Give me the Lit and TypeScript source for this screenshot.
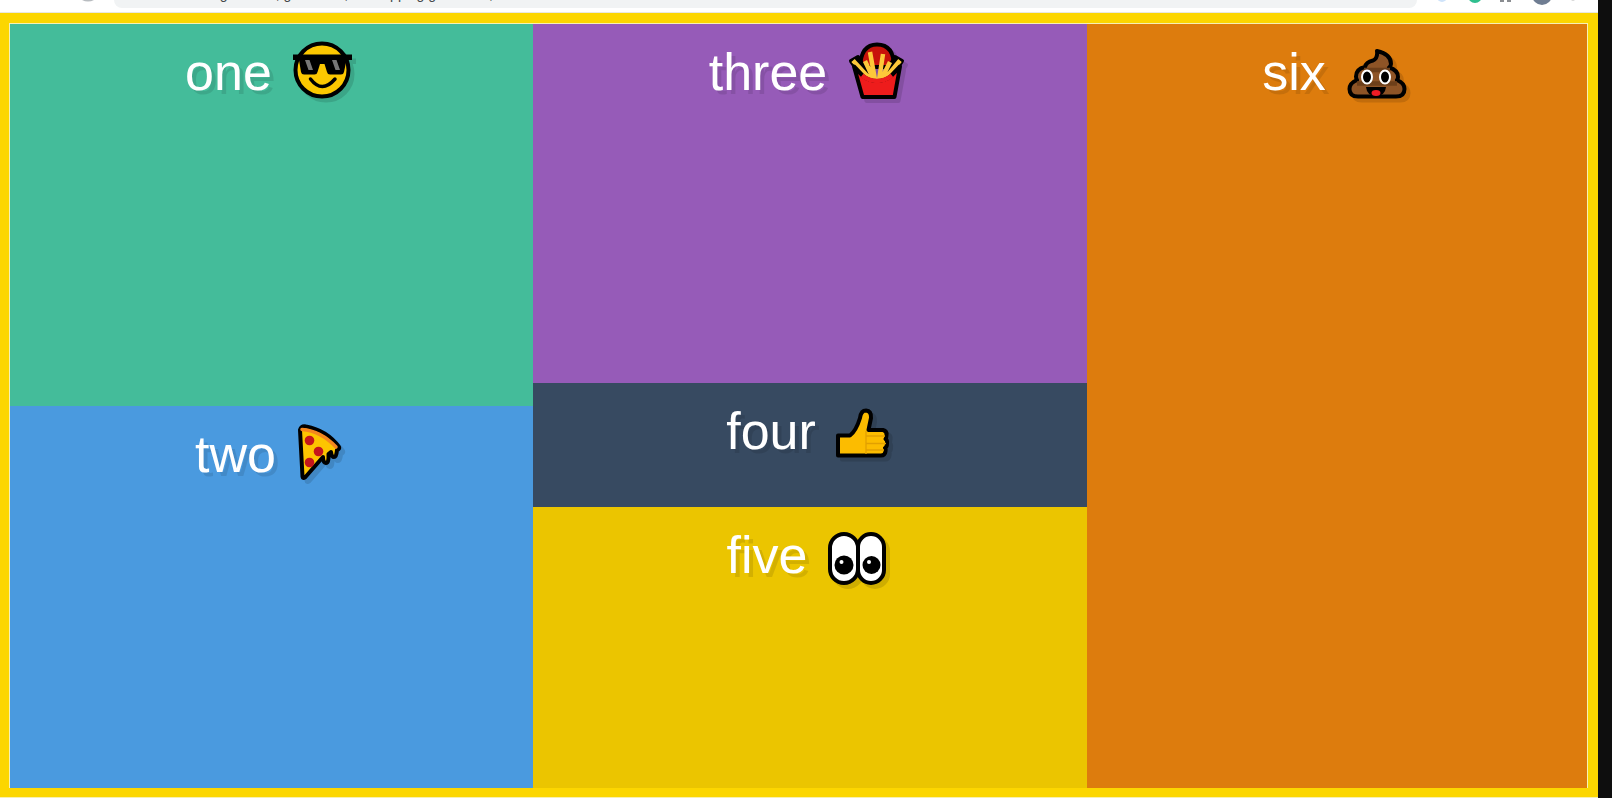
import { LitElement, html, css, svg } from "lit";
import { customElement } from "lit/decorators.js";

const O = "#000";

const cool = html`<svg class="emoji" width="72" height="64" viewBox="1 0 72 64">
  <circle cx="37" cy="31" r="26.500" fill="#fcc800" stroke="${O}" stroke-width="4"/>
  <path d="M8 15.500H67V21H61.500L59 33Q58.500 35.500 56 35.500H45Q42.500 35.500 42 33L39.500 25H35L32.500 33Q32 35.500 29.500 35.500H19Q16.500 35.500 16 33L14 21H8Z" fill="${O}"/>
  <path d="M20 21H24.500L28 31H23.500ZM47 21H51.500L55 31H50.500Z" fill="#777"/>
  <path d="M25.500 40Q37 55 50 40" fill="none" stroke="${O}" stroke-width="3.500" stroke-linecap="round"/>
</svg>`;

const fries = html`<svg class="emoji" width="70" height="64" viewBox="0 0 70 64">
  <path d="M19 28Q20 5.500 36 5.500Q53 5.500 53 28Z" fill="#c8120a" stroke="${O}" stroke-width="4"/>
  <path d="M10 22L17 18L28 36L21 38ZM61 22L54 18L44 36L51 38Z" fill="${O}" stroke="${O}" stroke-width="4" stroke-linejoin="round"/>
  <g fill="none" stroke="#fdc83a" stroke-width="4.500">
    <path d="M12 21.500L30 41M24 22L33 41M29 13L34 41M42 15L38 41M49 23L40 41M59 21.500L43 41"/>
  </g>
  <path d="M13 27.500L22 37Q28 42 36 42Q44 42 50 37L59 27.500L53.500 58H21.500Z" fill="#ee1c1c" stroke="${O}" stroke-width="4" stroke-linejoin="round"/>
  <path d="M21 36.500Q28 42 36 42Q44 42 51 36.500" fill="none" stroke="#ee1c1c" stroke-width="4.500"/>
</svg>`;

const poop = html`<svg class="emoji" width="72" height="64" viewBox="0 0 72 64">
  <path d="M37 12Q51 15 51 25Q51 27 49 28.500Q58 31 58 38Q58 40 57 41Q64.500 44 64.500 50Q64.500 57.500 56 57.500H18Q9.500 57.500 9.500 50Q9.500 44 17 41Q16 39.500 16 37.500Q16 30 25 28Q26 23 33 21.500Q38 19 37 12Z" fill="#8e5426" stroke="${O}" stroke-width="4" stroke-linejoin="round"/>
  <path d="M24 31H50M17 44.500H57" stroke="#6d3f1a" stroke-width="4.500"/>
  <ellipse cx="27" cy="38" rx="5" ry="6.500" fill="#000" stroke="#fff" stroke-width="2"/>
  <ellipse cx="45" cy="38" rx="5" ry="6.500" fill="#000" stroke="#fff" stroke-width="2"/>
  <path d="M26 48H46Q45 57 36 57Q27 57 26 48Z" fill="#000"/>
  <ellipse cx="36" cy="54" rx="4.500" ry="3" fill="#ee1c25"/>
</svg>`;

const pizza = html`<svg class="emoji" width="58" height="64" viewBox="0 0 58 64">
  <path d="M10 9Q11.500 4.500 16 5.500Q37 9.500 49 26Q50 28 47 29Q46.500 36 44 36Q41.500 36 41 31L38.500 33Q39 42 36 42Q33 41.500 33 36L15 56.500Q13 58 12.500 55.500Z" fill="#fdc500" stroke="${O}" stroke-width="4" stroke-linejoin="round"/>
  <path d="M12 8.500Q31 10 46 26" fill="none" stroke="#f5871f" stroke-width="3.500" stroke-linecap="round"/>
  <circle cx="19.500" cy="19.500" r="4.800" fill="#c4161c"/>
  <circle cx="28.500" cy="30.500" r="4.800" fill="#c4161c"/>
  <circle cx="19.500" cy="41.500" r="4.800" fill="#c4161c"/>
</svg>`;

const thumb = html`<svg class="emoji" width="64" height="64" viewBox="0 0 64 64">
  <path d="M8 37.500H20Q26 33 30 20Q31 12.500 36 12.500Q41.500 13 41 20L38.500 32H53Q57 33 56.500 37Q56.500 40 55.500 41Q57.500 42 57 45.500Q57 49 55 50Q56 51 55.500 53.500Q55 57.500 51 57.500H8Z" fill="#fcbc00" stroke="${O}" stroke-width="4" stroke-linejoin="round"/>
  <path d="M36 33V56M36 38H55M36 45.500H56M36 52H54" fill="none" stroke="#e2a000" stroke-width="1.300"/>
</svg>`;

const eyes = html`<svg class="emoji" width="72" height="64" viewBox="-1 0 72 64">
  <rect x="8" y="12" width="28" height="49" rx="14" fill="#fff" stroke="${O}" stroke-width="4"/>
  <rect x="36" y="12" width="26" height="49" rx="13" fill="#fff" stroke="${O}" stroke-width="4"/>
  <circle cx="22" cy="43" r="9.500" fill="#000"/>
  <circle cx="49.500" cy="43" r="9" fill="#000"/>
  <circle cx="19.500" cy="40" r="2" fill="#fff"/>
  <circle cx="47" cy="40" r="2" fill="#fff"/>
</svg>`;

@customElement("app-root")
export class AppRoot extends LitElement {
  static styles = css`
    :host {
      display: flex;
      width: 100%;
      height: 798px;
      overflow: hidden;
      background: #0e0e0e;
      font-family: "Liberation Sans", Arial, sans-serif;
    }
    .page {
      flex: 1;
      min-width: 0;
      display: flex;
      flex-direction: column;
      background: #fff;
    }
    .strip { width: 14px; flex: none; }
    .toolbar {
      height: 13px;
      flex: none;
      display: flex;
      align-items: flex-start;
      overflow: hidden;
      background: #fff;
      border-bottom: 1px solid #e8e8e2;
      box-sizing: border-box;
    }
    .chrome-left { width: 114px; flex: none; display: block; }
    .chrome-right { width: 181px; flex: none; display: block; }
    .address {
      flex: 1;
      height: 8px;
      overflow: hidden;
      background: #f1f3f4;
      border-radius: 0 0 14px 14px;
      padding-left: 52px;
      font-size: 14px;
      line-height: 14px;
      color: #44474a;
      white-space: nowrap;
    }
    .address span { display: block; margin-top: -13px; }
    .frame {
      flex: 1;
      min-height: 0;
      display: flex;
      background: #fcd600;
      padding: 10px 10px 9px 9px;
      filter: blur(0.3px);
    }
    .board {
      flex: 1;
      min-width: 0;
      display: flex;
      border: 1px solid #f6f0b4;
      border-width: 1px 1px 0 1px;
    }
    .column { display: flex; flex-direction: column; }
    .left { width: 523px; }
    .middle { width: 554px; }
    .right { flex: 1; min-width: 0; }
    .cell {
      display: flex;
      justify-content: center;
      align-items: flex-start;
      gap: 14px;
      padding-top: 15px;
      box-sizing: border-box;
      color: #fff;
      font-size: 52px;
      line-height: 58px;
      text-shadow: 4px 4px 0 rgba(0, 0, 0, 0.1);
    }
    .label { margin-top: 4px; }
    .emoji {
      display: block;
      flex: none;
      filter: drop-shadow(4px 4px 0 rgba(0, 0, 0, 0.12));
    }
    .one { height: 382px; background: #44bc9a; }
    .two { flex: 1; background: #4a9adf; }
    .three { height: 359px; background: #965bb8; }
    .four { height: 124px; background: #374a61; }
    .five { flex: 1; background: #ebc500; }
    .six { flex: 1; background: #dd7c0d; }
    .foot { height: 1px; flex: none; background: #f7efb0; }
  `;

  render() {
    return html`
      <div class="page">
        <div class="toolbar">
          <svg class="chrome-left" width="114" height="13" viewBox="0 0 114 13">
            ${svg`<path d="M82 0Q88 3 94 0Z" fill="#b8bcc0"/>`}
          </svg>
          <div class="address"><span>mastering flexbox, grid items, overlapping grid items, css</span></div>
          <svg class="chrome-right" width="181" height="13" viewBox="0 0 181 13">
            ${svg`<circle cx="25" cy="-3" r="5" fill="#cfe3fa"/>
            <circle cx="58" cy="-4" r="7" fill="#2fbf8f"/>
            <path d="M83 0V2H87V0ZM90 0V2H94V0Z" fill="#8a8d91"/>
            <circle cx="125" cy="-5" r="10" fill="#6f7d92"/>
            <circle cx="156" cy="-1" r="2" fill="#d8d8d8"/>`}
          </svg>
        </div>
        <div class="frame">
          <div class="board">
            <div class="column left">
              <div class="cell one"><span class="label">one</span>${cool}</div>
              <div class="cell two"><span class="label">two</span>${pizza}</div>
            </div>
            <div class="column middle">
              <div class="cell three"><span class="label">three</span>${fries}</div>
              <div class="cell four"><span class="label">four</span>${thumb}</div>
              <div class="cell five"><span class="label">five</span>${eyes}</div>
            </div>
            <div class="column right">
              <div class="cell six"><span class="label">six</span>${poop}</div>
            </div>
          </div>
        </div>
        <div class="foot"></div>
      </div>
      <div class="strip"></div>
    `;
  }
}
